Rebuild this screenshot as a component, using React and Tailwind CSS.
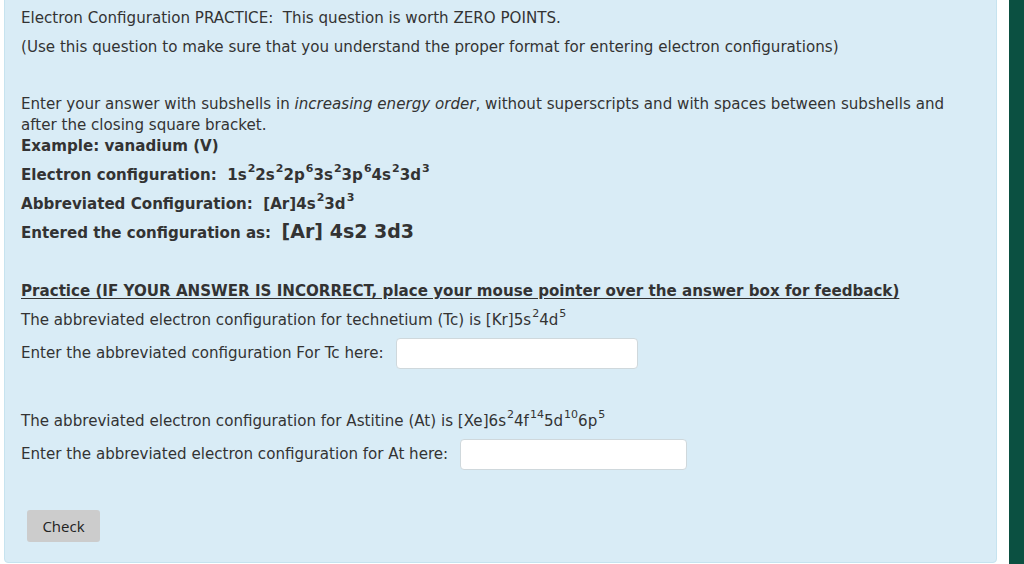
import React from 'react'

const Sup = ({ children }) => (
  <sup className="relative -top-[8px] ml-[1px] text-[11px] leading-none">{children}</sup>
)

const Line = ({ className = '', children }) => (
  <p className={`leading-[21px] ${className}`}>{children}</p>
)

export default function App() {
  return (
    <div className="flex h-[564px] w-[1024px] overflow-hidden bg-white font-['DejaVu_Sans',sans-serif] text-[15.1px] text-[#333]">
      <div className="ml-[4px] -mt-[10px] flex h-[573px] w-[993px] flex-col rounded-[4px] border border-[#c6e3ef] bg-[#d9ecf6] pl-[16px] pt-[17px]">
        <Line>Electron Configuration PRACTICE:&nbsp; This question is worth ZERO POINTS.</Line>
        <Line className="mt-[8px]">
          (Use this question to make sure that you understand the proper format for entering electron configurations)
        </Line>

        <Line className="mt-[36px] w-[945px]">
          Enter your answer with subshells in <i>increasing energy order</i>, without superscripts and with spaces between subshells and after the closing square bracket.
        </Line>
        <Line className="font-bold">Example: vanadium (V)</Line>
        <Line className="mt-[8px] font-bold">
          Electron configuration:&nbsp; 1s<Sup>2</Sup>2s<Sup>2</Sup>2p<Sup>6</Sup>3s<Sup>2</Sup>3p<Sup>6</Sup>4s<Sup>2</Sup>3d<Sup>3</Sup>
        </Line>
        <Line className="mt-[8px] font-bold">
          Abbreviated Configuration:&nbsp; [Ar]4s<Sup>2</Sup>3d<Sup>3</Sup>
        </Line>
        <Line className="mt-[6px] font-bold">
          Entered the configuration as:&nbsp; <span className="text-[19px]">[Ar] 4s2 3d3</span>
        </Line>

        <Line className="mt-[37px] font-bold underline underline-offset-2">
          Practice (IF YOUR ANSWER IS INCORRECT, place your mouse pointer over the answer box for feedback)
        </Line>
        <Line className="mt-[8px]">
          The abbreviated electron configuration for technetium (Tc) is [Kr]5s<Sup>2</Sup>4d<Sup>5</Sup>
        </Line>
        <div className="mt-[7px] flex items-center gap-[12px]">
          <span className="leading-[21px]">Enter the abbreviated configuration For Tc here:</span>
          <input
            type="text"
            className="h-[31px] w-[242px] rounded-[4px] border border-[#cfd8dc] bg-white"
          />
        </div>

        <Line className="mt-[42px]">
          The abbreviated electron configuration for Astitine (At) is [Xe]6s<Sup>2</Sup>4f<Sup>14</Sup>5d<Sup>10</Sup>6p<Sup>5</Sup>
        </Line>
        <div className="mt-[7px] flex items-center gap-[12px]">
          <span className="leading-[21px]">Enter the abbreviated electron configuration for At here:</span>
          <input
            type="text"
            className="h-[31px] w-[227px] rounded-[4px] border border-[#cfd8dc] bg-white"
          />
        </div>

        <div className="mt-[40px] pl-[6px]">
          <button
            type="button"
            className="h-[32px] w-[73px] rounded-[3px] bg-[#cccccc] font-['Open_Sans',sans-serif] text-[15px] text-[#222]"
          >
            Check
          </button>
        </div>
      </div>
      <div className="ml-[12px] h-full w-[15px] bg-[#0b5041]" />
    </div>
  )
}
